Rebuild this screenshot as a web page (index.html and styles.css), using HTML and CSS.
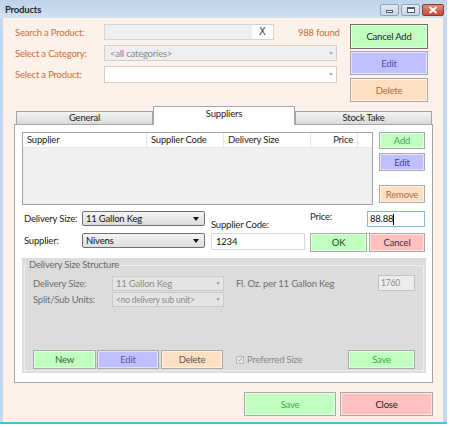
FILE: index.html
```html
<!DOCTYPE html>
<html>
<head>
<meta charset="utf-8">
<link rel="stylesheet" href="styles.css">
</head>
<body>
<div class="window">
  <div class="titlebar">
    <span class="title">Products</span>
    <div class="ctrls">
      <span class="cb min"><i></i></span>
      <span class="cb max"><i></i></span>
      <span class="cb close">
        <svg width="10" height="8" viewBox="0 0 10 8"><path d="M1.5 1 L8.5 7 M8.5 1 L1.5 7" stroke="#fff" stroke-width="2"/></svg>
      </span>
    </div>
  </div>
  <div class="content">
    <div class="top">
      <div class="form">
        <div class="row r1">
          <span class="lbl">Search a Product:</span>
          <div class="search"><span class="sfield"></span><span class="sx">X</span></div>
          <span class="found">988 found</span>
        </div>
        <div class="row r2">
          <span class="lbl">Select a Category:</span>
          <div class="combo flat dis"><span class="ctext">&lt;all categories&gt;</span><i class="sarr"></i></div>
        </div>
        <div class="row r3">
          <span class="lbl">Select a Product:</span>
          <div class="combo flat white"><span class="ctext"></span><i class="sarr"></i></div>
        </div>
      </div>
      <div class="rbtns">
        <button class="btn green def b-cancel">Cancel Add</button>
        <button class="btn blue b-edit">Edit</button>
        <button class="btn peach b-del">Delete</button>
      </div>
    </div>

    <div class="tabs">
      <div class="tabstrip">
        <div class="tab t1">General</div>
        <div class="tab sel">Suppliers</div>
        <div class="tab t3">Stock Take</div>
      </div>
      <div class="panel">
        <div class="rowa">
          <div class="list">
            <div class="lhead">
              <span class="hc c-sup">Supplier</span>
              <span class="hc c-code">Supplier Code</span>
              <span class="hc c-size">Delivery Size</span>
              <span class="hc c-price">Price</span>
              <span class="hc c-rest"></span>
            </div>
          </div>
          <div class="sidebtns">
            <button class="btn green s-add">Add</button>
            <button class="btn blue s-edit">Edit</button>
            <button class="btn peach s-rem">Remove</button>
          </div>
        </div>

        <div class="rowb">
          <span class="blbl">Delivery Size:</span>
          <div class="combo grad"><span class="ctext">11 Gallon Keg</span><i class="barr"></i></div>
          <span class="blbl codelbl">Supplier Code:</span>
          <span class="blbl pricelbl">Price:</span>
          <div class="pricebox">88.88<span class="caret"></span></div>

          <span class="blbl">Supplier:</span>
          <div class="combo grad"><span class="ctext">Nivens</span><i class="barr"></i></div>
          <div class="codebox">1234</div>
          <button class="btn green b-ok">OK</button>
          <button class="btn pink b-cn">Cancel</button>
        </div>

        <div class="group">
          <div class="gbox">
            <span class="legend">Delivery Size Structure</span>
            <div class="grow g1">
              <span class="glbl">Delivery Size:</span>
              <div class="combo gdis"><span class="ctext">11 Gallon Keg</span><i class="sarr"></i></div>
              <span class="glbl floz">Fl. Oz. per 11 Gallon Keg</span>
              <div class="ozbox">1760</div>
            </div>
            <div class="grow g2">
              <span class="glbl">Split/Sub Units:</span>
              <div class="combo gdis"><span class="ctext small">&lt;no delivery sub unit&gt;</span><i class="sarr"></i></div>
            </div>
            <div class="gbtns">
              <button class="btn green g-new">New</button>
              <button class="btn blue g-edit">Edit</button>
              <button class="btn peach g-del">Delete</button>
              <span class="chk"><svg width="7" height="7" viewBox="0 0 7 7"><path d="M1 3.5 L3 5.5 L6 1" stroke="#9a9a9a" stroke-width="1.1" fill="none"/></svg></span>
              <span class="chklbl">Preferred Size</span>
              <button class="btn green g-save">Save</button>
            </div>
          </div>
        </div>
      </div>
    </div>

    <div class="bottom">
      <button class="btn green big bsave">Save</button>
      <button class="btn pink big bclose">Close</button>
    </div>
  </div>
</div>
</body>
</html>
```

FILE: styles.css
```css
* { box-sizing: border-box; }
body {
  margin: 0;
  background: #fff;
  font-family: Lato, "Open Sans", sans-serif;
  font-size: 9.5px;
  letter-spacing: -0.2px;
  white-space: nowrap;
  color: #222;
}
.window {
  width: 447px;
  height: 424px;
  background: #c4d8ed;
  border-bottom: 2px solid #3cc4e4;
  display: flex;
  flex-direction: column;
}
.titlebar {
  height: 18px;
  background: linear-gradient(#bdd2e9, #d2e1f1);
  display: flex;
  align-items: center;
  padding: 0 3px 0 5px;
}
.title {
  font-weight: 700;
  font-size: 9.5px;
  color: #1b2633;
  letter-spacing: -0.2px;
}
.ctrls {
  margin-left: auto;
  display: flex;
  gap: 2px;
  align-self: flex-start;
  margin-top: 4px;
}
.cb {
  height: 12px;
  width: 19px;
  border: 1px solid #8aa2bd;
  border-radius: 2px;
  background: linear-gradient(#e4ecf5, #c5d5e7);
  display: flex;
  align-items: center;
  justify-content: center;
}
.cb.min i {
  width: 7px;
  height: 3px;
  margin-top: 3px;
  background: #fff;
  border: 1px solid #4a5a70;
}
.cb.max i {
  width: 8px;
  height: 6px;
  border: 1px solid #4a5a70;
  border-top-width: 2px;
  background: #fff;
}
.cb.close {
  width: 22px;
  border-color: #8c3a2e;
  background: linear-gradient(#e28a78, #c44a38);
}

.content {
  flex: 1;
  margin: 0 4px 0 3px;
  background: #fdf1e9;
  display: flex;
  flex-direction: column;
}

/* top area */
.top {
  display: flex;
  padding: 6px 0 0 12px;
  height: 84px;
}
.form { width: 322px; }
.row { display: flex; align-items: center; }
.r1 { height: 16px; }
.r2 { height: 16px; margin-top: 5px; }
.r3 { height: 17px; margin-top: 5px; }
.lbl {
  width: 89px;
  color: #c9703a;
  flex: none;
}
.search {
  width: 170px;
  height: 16px;
  border: 1px solid #d4d4d4;
  display: flex;
  flex: none;
}
.sfield { flex: 1; background: #efefef; }
.sx {
  width: 21px;
  background: #fff;
  text-align: center;
  font-family: "DejaVu Sans", sans-serif;
  font-size: 10px;
  line-height: 14px;
  color: #444;
  letter-spacing: 0;
}
.found {
  margin-left: 24px;
  color: #c9703a;
}
.combo {
  position: relative;
  display: flex;
  align-items: center;
  height: 100%;
  flex: none;
}
.combo.flat { width: 233px; border: 1px solid #cfcfcf; }
.combo.dis { background: #efefef; }
.combo.white { background: #fff; }
.ctext { padding-left: 5px; white-space: nowrap; }
.combo.dis .ctext { color: #8a8a8a; }
.sarr {
  margin-left: auto;
  margin-right: 3px;
  width: 0;
  height: 0;
  border-left: 2.5px solid transparent;
  border-right: 2.5px solid transparent;
  border-top: 3px solid #a8a8a8;
}
.rbtns {
  margin-left: 13px;
  width: 78px;
  display: flex;
  flex-direction: column;
}

/* buttons */
.btn {
  font: inherit;
  letter-spacing: inherit;
  padding: 0;
  margin: 0;
  border: 1px solid #a9a9a9;
  box-shadow: inset 0 0 0 1px rgba(255,255,255,0.55);
  color: #222;
  cursor: default;
}
.green { background: #c0ffc0; }
.blue { background: #c0c0ff; }
.peach { background: #ffdfc2; }
.pink { background: #ffc0c0; }
.def { border-color: #6f6f6f; }
.b-cancel { height: 25px; color: #1e1e1e; }
.b-edit { height: 24px; margin-top: 2px; color: #4d4db8; }
.b-del { height: 24px; margin-top: 3px; color: #b5683a; }

/* tabs */
.tabs { margin: 4px 0 0 11px; width: 419px; }
.tabstrip {
  display: flex;
  height: 18px;
  padding-left: 2px;
  align-items: flex-end;
  position: relative;
  z-index: 1;
}
.tab {
  height: 13px;
  border: 1px solid #a6a6a6;
  border-bottom: none;
  background: linear-gradient(#f3f3f3, #dadada);
  text-align: center;
  line-height: 12px;
  color: #222;
}
.t1 { width: 137px; }
.t3 { width: 137px; }
.tab.sel {
  width: 142px;
  height: 19px;
  margin-bottom: -1px;
  background: #fff;
  line-height: 14px;
  border-color: #a6a6a6;
}
.panel {
  height: 259px;
  border: 1px solid #a6a6a6;
  background: #fff;
  padding: 7px 0 0 7px;
}
.rowa { display: flex; height: 73px; }
.list {
  width: 351px;
  height: 73px;
  border: 1px solid #a3a3a3;
  background: #f0f0f0;
}
.lhead {
  display: flex;
  height: 15px;
  background: #fff;
  border-bottom: 1px solid #e8e8e8;
}
.hc {
  line-height: 14px;
  border-right: 1px solid #e6e6e6;
  padding-left: 4px;
  color: #222;
}
.c-sup { width: 124px; }
.c-code { width: 77px; }
.c-size { width: 87px; }
.c-price { width: 47px; text-align: right; padding-right: 4px; }
.c-rest { flex: 1; border-right: none; }
.sidebtns {
  margin-left: 6px;
  width: 46px;
  display: flex;
  flex-direction: column;
}
.s-add { height: 17px; color: #3aab3a; }
.s-edit { height: 18px; margin-top: 4px; color: #3d3d9a; }
.s-rem { height: 18px; margin-top: 14px; color: #b36a40; }

/* row b */
.rowb {
  margin-top: 6px;
  display: grid;
  grid-template-columns: 60px 129px 99px 57px 58px;
  grid-template-rows: 16px 19px;
  row-gap: 6px;
  align-items: start;
}
.blbl { padding-left: 2px; color: #222; line-height: 12px; margin-top: 2px; }
.combo.grad {
  width: 123px;
  height: 15px;
  border: 1px solid #707070;
  border-radius: 2px;
  background: linear-gradient(#f4f4f4, #dddddd);
}
.combo.grad .ctext { color: #111; padding-left: 3px; }
.barr {
  margin-left: auto;
  margin-right: 5px;
  width: 0;
  height: 0;
  border-left: 3px solid transparent;
  border-right: 3px solid transparent;
  border-top: 4px solid #111;
}
.codelbl { padding-left: 0; margin-top: 8px; }
.pricelbl { padding-left: 0; margin-top: 0; }
.pricebox {
  width: 58px;
  height: 16px;
  border: 1px solid #86b6e6;
  background: #fff;
  padding-left: 2px;
  line-height: 14px;
  color: #111;
  display: flex;
  align-items: center;
}
.caret { width: 1px; height: 11px; background: #000; margin-left: 0; }
.codebox {
  width: 94px;
  height: 17px;
  border: 1px solid #dadada;
  background: #fff;
  padding-left: 4px;
  line-height: 15px;
  color: #111;
}
.b-ok { width: 57px; height: 19px; color: #224022; }
.b-cn { width: 56px; height: 19px; margin-left: 2px; color: #333; }

/* group */
.group {
  margin-top: 6px;
  width: 404px;
  height: 115px;
  background: #dcdcdc;
  padding: 7px 2px 2px 2px;
}
.gbox {
  position: relative;
  height: 106px;
  border: 1px solid #efefef;
  padding: 9px 8px 1px 8px;
  display: flex;
  flex-direction: column;
}
.legend {
  position: absolute;
  top: -7px;
  left: 3px;
  background: #dcdcdc;
  padding: 0 1px;
  color: #6a6a6a;
  line-height: 12px;
}
.grow { display: flex; align-items: center; }
.g1 { height: 16px; }
.g2 { height: 15px; margin-top: 1px; }
.glbl { color: #707070; width: 79px; flex: none; }
.combo.gdis {
  width: 112px;
  height: 15px;
  border: 1px solid #cacaca;
  background: #e4e4e4;
}
.combo.gdis .ctext { color: #8a8a8a; padding-left: 3px; }
.ctext.small { font-size: 8.5px; }
.floz { width: 142px; margin-left: 12px; }
.ozbox {
  width: 37px;
  height: 16px;
  border: 1px solid #c2c2c2;
  background: #ececec;
  color: #888;
  padding-left: 2px;
  line-height: 14px;
  font-size: 8.5px;
}
.gbtns {
  margin-top: auto;
  display: flex;
  align-items: center;
  height: 19px;
}
.g-new { width: 63px; height: 19px; color: #3d5a3d; }
.g-edit { width: 62px; height: 19px; margin-left: 1px; color: #55559a; }
.g-del { width: 62px; height: 19px; margin-left: 2px; color: #555; }
.chk {
  margin-left: 13px;
  width: 8px;
  height: 8px;
  border: 1px solid #b8b8b8;
  background: #e8e8e8;
  display: flex;
  align-items: center;
  justify-content: center;
}
.chklbl { margin-left: 3px; color: #8a8a8a; }
.g-save { margin-left: auto; width: 67px; height: 19px; color: #3aab3a; }

/* bottom */
.bottom {
  margin-top: 9px;
  display: flex;
  justify-content: flex-end;
  padding-right: 10px;
}
.big { height: 24px; }
.bsave { width: 92px; color: #3aab3a; }
.bclose { width: 93px; margin-left: 4px; color: #222; }
```
